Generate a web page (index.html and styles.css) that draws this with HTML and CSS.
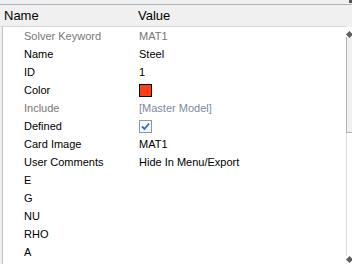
FILE: index.html
```html
<!DOCTYPE html>
<html lang="en">
<head>
  <meta charset="UTF-8">
  <title>Material Properties</title>
  <link rel="stylesheet" href="styles.css">
</head>
<body>
  <div class="topbar"><span class="corner"></span></div>

  <!-- Column headers -->
  <div class="header">
    <div class="col-name">Name</div>
    <div class="col-value">Value</div>
  </div>

  <div class="panel">
    <div class="grid">
      <div class="row muted"><span class="label">Solver Keyword</span><span class="value">MAT1</span></div>
      <div class="row"><span class="label">Name</span><span class="value">Steel</span></div>
      <div class="row"><span class="label">ID</span><span class="value">1</span></div>
      <div class="row"><span class="label">Color</span><span class="value"><span class="swatch"></span></span></div>
      <div class="row muted"><span class="label">Include</span><span class="value link">[Master Model]</span></div>
      <div class="row">
        <span class="label">Defined</span>
        <span class="value">
          <span class="check">
            <svg width="11" height="11" viewBox="0 0 11 11"><path d="M2 5.5 L4.5 8 L9 2.5" fill="none" stroke="#2a6cc4" stroke-width="1.8"/></svg>
          </span>
        </span>
      </div>
      <div class="row"><span class="label">Card Image</span><span class="value">MAT1</span></div>
      <div class="row"><span class="label">User Comments</span><span class="value">Hide In Menu/Export</span></div>
      <div class="row"><span class="label">E</span><span class="value"></span></div>
      <div class="row"><span class="label">G</span><span class="value"></span></div>
      <div class="row"><span class="label">NU</span><span class="value"></span></div>
      <div class="row"><span class="label">RHO</span><span class="value"></span></div>
      <div class="row"><span class="label">A</span><span class="value"></span></div>
    </div>

    <!-- Vertical scrollbar -->
    <div class="scrollbar">
      <div class="arrow up"></div>
      <div class="thumb"></div>
      <div class="track"></div>
      <div class="arrow down"></div>
    </div>
  </div>
</body>
</html>
```

FILE: styles.css
```css
* {
  margin: 0;
  padding: 0;
  box-sizing: border-box;
}

body {
  font-family: "Liberation Sans", Arial, sans-serif;
  background-color: #f0f0f0;
  width: 352px;
  height: 264px;
  overflow: hidden;
}

.topbar {
  height: 5px;
  border-bottom: 1px solid #a8b4c0;
  position: relative;
}

.corner {
  position: absolute;
  right: 0;
  top: 0;
  width: 3px;
  height: 3px;
  background: #555;
}

.header {
  display: flex;
  height: 22px;
  align-items: center;
  font-size: 13px;
  color: #000;
  border-bottom: 1px solid #d8d8d8;
  width: 346px;
}

.col-name {
  width: 138px;
  padding-left: 4px;
}

.col-value {
  flex: 1;
}

.panel {
  display: flex;
  height: 237px;
}

.grid {
  flex: 1;
  background: #fff;
  border-left: 1px solid #b8c0c8;
  margin-left: 2px;
  font-size: 11px;
  color: #000;
}

.row {
  display: flex;
  height: 18px;
  align-items: center;
}

.label {
  width: 136px;
  padding-left: 21px;
}

.value {
  flex: 1;
  display: flex;
  align-items: center;
}

.muted {
  color: #777;
}

.muted .link {
  color: #7d8aa0;
}

.swatch {
  width: 13px;
  height: 13px;
  background: #ff3c14;
  border: 1px solid #000;
}

.check {
  width: 13px;
  height: 13px;
  border: 1px solid #8a98a8;
  background: #f4f8fc;
  display: flex;
  align-items: center;
  justify-content: center;
}

.scrollbar {
  width: 6px;
  display: flex;
  flex-direction: column;
  background: #fff;
  padding-top: 2px;
}

.arrow {
  height: 8px;
  position: relative;
}

.arrow.up::before,
.arrow.down::before {
  content: "";
  position: absolute;
  left: 1px;
  width: 5px;
  height: 5px;
  background: #606060;
  transform: rotate(45deg);
}

.arrow.up::before {
  top: 3px;
}

.arrow.down::before {
  top: 1px;
}

.thumb {
  height: 96px;
  background: #f0f0f0;
  border-left: 1px solid #a8b4c0;
  border-bottom: 1px solid #a8b4c0;
}

.track {
  flex: 1;
  border-left: 1px solid #dcdcdc;
}
```
